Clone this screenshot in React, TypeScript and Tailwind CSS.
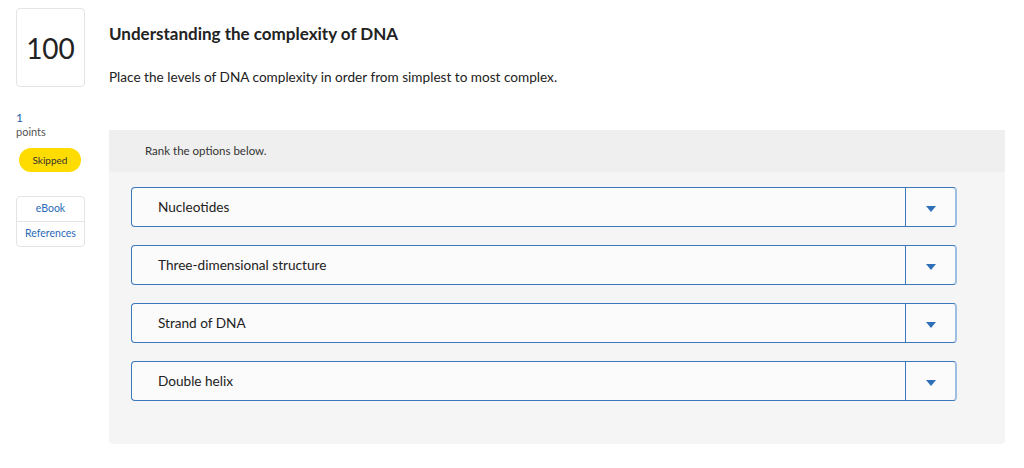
const options = ["Nucleotides", "Three-dimensional structure", "Strand of DNA", "Double helix"];

const Caret = () => (
  <svg width="10" height="6" viewBox="0 0 10 6" className="block">
    <path d="M0 0h10L5 6z" fill="#2f6fb8" />
  </svg>
);

export default function App() {
  return (
    <div className="min-h-screen bg-white font-['Lato','Liberation_Sans',sans-serif] text-[#222]">
      <div className="flex gap-6 pl-4 pr-[19px] pt-2">
        <div className="flex w-[69px] shrink-0 flex-col">
          <div className="flex h-[79px] items-center justify-center rounded border border-[#e4e4e4]">
            <span className="text-[28px] leading-none text-[#222]">100</span>
          </div>
          <div className="mt-[24px] text-[12px] leading-[14px] text-[#1f5ea8]">1</div>
          <div className="text-[11px] leading-[13px] text-[#555]">points</div>
          <div className="ml-[3px] mt-[10px] flex h-6 w-[62px] items-center justify-center rounded-full bg-[#ffdc00] text-[10px] text-[#333]">
            Skipped
          </div>
          <div className="mt-6 flex flex-col rounded border border-[#e4e4e4] text-[10.5px] text-[#2a6ab8]">
            <div className="flex h-[25px] items-center justify-center border-b border-[#e4e4e4]">eBook</div>
            <div className="flex h-[24px] items-center justify-center">References</div>
          </div>
        </div>

        <div className="flex min-w-0 flex-1 flex-col">
          <h1 className="mt-[16px] text-[17px] font-bold leading-5 text-[#222]">Understanding the complexity of DNA</h1>
          <p className="mt-[25px] text-[13.6px] leading-4 text-[#222]">
            Place the levels of DNA complexity in order from simplest to most complex.
          </p>

          <div className="mt-[45px] flex h-[314px] flex-col rounded-sm bg-[#f5f5f5]">
            <div className="flex h-[42px] items-center bg-[#efefef] pl-9 text-[11.5px] text-[#333]">
              Rank the options below.
            </div>
            <div className="flex flex-col gap-[18px] pl-[22px] pr-[48px] pt-[15px]">
              {options.map((opt) => (
                <div
                  key={opt}
                  className="flex h-10 items-stretch rounded-[4px] border border-r-2 border-[#3a78be] border-r-[#9dbde3] bg-[#fbfbfb]"
                >
                  <div className="flex flex-1 items-center pl-[26px] text-[13.6px] text-[#222]">{opt}</div>
                  <div className="flex w-[50px] items-center justify-center border-l border-[#3a78be] pt-1">
                    <Caret />
                  </div>
                </div>
              ))}
            </div>
          </div>
        </div>
      </div>
    </div>
  );
}
